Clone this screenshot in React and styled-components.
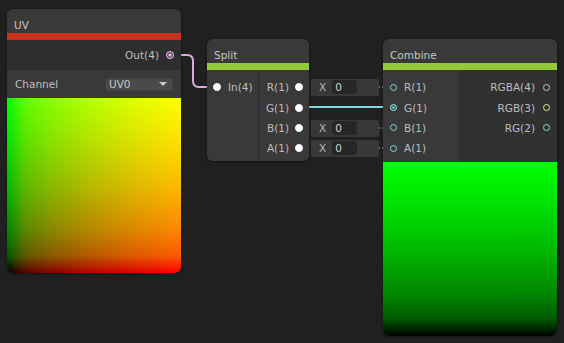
import styled, { createGlobalStyle } from "styled-components";

const GlobalStyle = createGlobalStyle`
  html, body {
    margin: 0;
    padding: 0;
    background: #202020;
  }
  body {
    font-family: "DejaVu Sans", "Liberation Sans", sans-serif;
  }
`;

// sRGB-ish ramp of a linear 0..1 channel
const ramp = (ch) =>
  [0, 0.1, 0.25, 0.5, 0.75, 1]
    .map((t) => {
      const v = Math.round(Math.pow(t, 1 / 2.2) * 255);
      const c = ch === "r" ? `rgb(${v},0,0)` : `rgb(0,${v},0)`;
      return `${c} ${t * 100}%`;
    })
    .join(", ");

const PORT = {
  white: { ring: "#ffffff", fill: "#ffffff" },
  cyan: { ring: "#84d9de", fill: "transparent" },
  cyanOn: { ring: "#84d9de", fill: "#84d9de" },
  pinkOn: { ring: "#e2b2e2", fill: "#e2b2e2" },
  pink: { ring: "#e2b2e2", fill: "transparent" },
  yellow: { ring: "#e8e48c", fill: "transparent" },
  green: { ring: "#94dc94", fill: "transparent" },
};

const Canvas = styled.div`
  position: relative;
  width: 564px;
  height: 343px;
  background: #202020;
  overflow: hidden;
`;

const Wires = styled.svg`
  position: absolute;
  left: 0;
  top: 0;
  width: 564px;
  height: 343px;
  z-index: 1;
`;

const Node = styled.div`
  position: absolute;
  left: ${(p) => p.$x}px;
  top: ${(p) => p.$y}px;
  width: ${(p) => p.$w}px;
  border-radius: 6px;
  background: #393939;
  box-shadow: 0 1px 3px rgba(0, 0, 0, 0.45);
  overflow: hidden;
  display: flex;
  flex-direction: column;
  z-index: 2;
`;

const Title = styled.div`
  height: 24px;
  box-sizing: border-box;
  padding: 9px 0 0 7px;
  line-height: 14px;
  font-size: 10.5px;
  color: #c6c6c6;
`;

const Bar = styled.div`
  height: 7px;
  background: ${(p) => p.$color};
`;

const OutRow = styled.div`
  height: 30px;
  background: #2e2e2e;
  display: flex;
  align-items: center;
  justify-content: flex-end;
  gap: 7px;
  padding-right: 7px;
`;

const FieldRow = styled.div`
  height: 28px;
  background: #393939;
  display: flex;
  align-items: center;
  justify-content: space-between;
  padding: 0 8px;
`;

const Label = styled.span`
  font-size: 10.5px;
  color: #bdbdbd;
  line-height: 14px;
  white-space: nowrap;
`;

const Dropdown = styled.div`
  width: 68px;
  height: 13px;
  box-sizing: border-box;
  background: #4a4a4a;
  border: 1px solid #3f3f3f;
  border-radius: 2px;
  display: flex;
  align-items: center;
  justify-content: space-between;
  padding: 0 5px 0 3px;
  font-size: 10.5px;
  color: #c6c6c6;

  &::after {
    content: "";
    border-left: 4px solid transparent;
    border-right: 4px solid transparent;
    border-top: 4px solid #c8c8c8;
  }
`;

const Body = styled.div`
  display: flex;
  height: ${(p) => p.$h}px;
`;

const Column = styled.div`
  width: ${(p) => p.$w}px;
  box-sizing: border-box;
  background: ${(p) => (p.$light ? "#393939" : "#313131")};
  padding-top: 7px;
  display: flex;
  flex-direction: column;
  align-items: ${(p) => (p.$right ? "flex-end" : "flex-start")};
  padding-left: ${(p) => (p.$right ? 0 : p.$pad)}px;
  padding-right: ${(p) => (p.$right ? p.$pad : 0)}px;
  border-right: ${(p) => (p.$split ? "1px solid #2b2b2b" : "none")};
`;

const Row = styled.div`
  height: 20.4px;
  display: flex;
  align-items: center;
  gap: ${(p) => p.$gap}px;
`;

const Port = styled.span`
  width: ${(p) => p.$size || 7}px;
  height: ${(p) => p.$size || 7}px;
  box-sizing: border-box;
  border-radius: 50%;
  border: 1.5px solid ${(p) => PORT[p.$kind].ring};
  background: ${(p) => PORT[p.$kind].fill};
  box-shadow: inset 0 0 0 1.2px ${(p) =>
    p.$kind === "cyanOn" || p.$kind === "pinkOn" ? "#393939" : "transparent"};
  flex: none;
`;

const Preview = styled.div`
  height: ${(p) => p.$h}px;
  border-radius: 0 0 6px 6px;
  background: ${(p) =>
    p.$kind === "uv"
      ? `linear-gradient(to right, ${ramp("r")}), linear-gradient(to top, ${ramp("g")})`
      : `linear-gradient(to top, ${ramp("g")})`};
  background-blend-mode: screen;
`;

const Inline = styled.div`
  position: absolute;
  left: 311px;
  top: ${(p) => p.$y - 8.5}px;
  width: 68px;
  height: 17px;
  box-sizing: border-box;
  background: #383838;
  border-radius: 2px;
  display: flex;
  align-items: center;
  padding-left: 8px;
  gap: 6px;
  font-size: 10.5px;
  color: #b8b8b8;
  z-index: 2;
`;

const NumField = styled.span`
  width: 25px;
  height: 14px;
  box-sizing: border-box;
  background: #262626;
  border-radius: 3px;
  padding-left: 3px;
  line-height: 14px;
  color: #d0d0d0;
`;

const splitOuts = ["R(1)", "G(1)", "B(1)", "A(1)"];
const combineOuts = [
  ["RGBA(4)", "pink"],
  ["RGB(3)", "yellow"],
  ["RG(2)", "green"],
];
const inlineRows = [87, 128, 148];

export default function App() {
  return (
    <Canvas>
      <GlobalStyle />
      <Wires viewBox="0 0 564 343">
        <path
          d="M173 55 H187 Q193 55 193 61 V81 Q193 87 199 87 H214"
          fill="none"
          stroke="#d8aed8"
          strokeWidth="2"
        />
        <line x1="300" y1="107" x2="391" y2="107" stroke="#84d9de" strokeWidth="2" />
        {inlineRows.map((y) => (
          <g key={y}>
            <line
              x1="372"
              y1={y}
              x2="391"
              y2={y}
              stroke="#5aa4a8"
              strokeWidth="1.5"
              strokeDasharray="3 2"
            />
            <circle cx="370.5" cy={y} r="2.2" fill="#84d9de" />
          </g>
        ))}
      </Wires>

      <Node $x={7} $y={9} $w={174}>
        <Title>UV</Title>
        <Bar $color="#c9311f" />
        <OutRow>
          <Label>Out(4)</Label>
          <Port $kind="pinkOn" $size={8} />
        </OutRow>
        <FieldRow>
          <Label>Channel</Label>
          <Dropdown>UV0</Dropdown>
        </FieldRow>
        <Preview $kind="uv" $h={175} />
      </Node>

      <Node $x={207} $y={39} $w={102}>
        <Title>Split</Title>
        <Bar $color="#96c83c" />
        <Body $h={91}>
          <Column $w={52} $pad={6} $light $split>
            <Row $gap={7}>
              <Port $kind="white" $size={8} />
              <Label>In(4)</Label>
            </Row>
          </Column>
          <Column $w={50} $pad={6} $right $light>
            {splitOuts.map((l) => (
              <Row key={l} $gap={6}>
                <Label>{l}</Label>
                <Port $kind="white" $size={8} />
              </Row>
            ))}
          </Column>
        </Body>
      </Node>

      {inlineRows.map((y) => (
        <Inline key={y} $y={y}>
          X<NumField>0</NumField>
        </Inline>
      ))}

      <Node $x={383} $y={39} $w={174}>
        <Title>Combine</Title>
        <Bar $color="#96c83c" />
        <Body $h={92}>
          <Column $w={77} $pad={7} $light $split>
            {splitOuts.map((l, i) => (
              <Row key={l} $gap={7}>
                <Port $kind={i === 1 ? "cyanOn" : "cyan"} />
                <Label>{l}</Label>
              </Row>
            ))}
          </Column>
          <Column $w={97} $pad={7} $right>
            {combineOuts.map(([l, k]) => (
              <Row key={l} $gap={8}>
                <Label>{l}</Label>
                <Port $kind={k} />
              </Row>
            ))}
          </Column>
        </Body>
        <Preview $kind="g" $h={174} />
      </Node>
    </Canvas>
  );
}
